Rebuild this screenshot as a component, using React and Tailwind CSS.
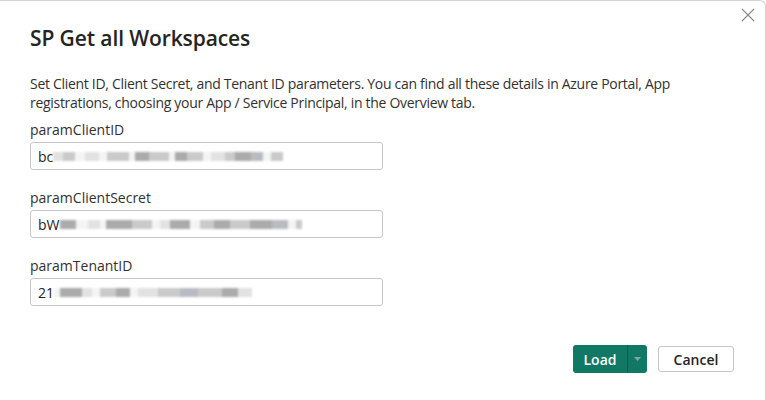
import React from "react";

const Blur = ({ blocks }) => (
  <div className="flex items-center blur-[1.3px]">
    {blocks.map((b, i) => (
      <div key={i} style={{ width: b[0], background: b[1], height: b[2] || 9 }} />
    ))}
  </div>
);

const Field = ({ label, prefix, blocks }) => (
  <div className="flex flex-col">
    <div className="text-[14px] leading-[18px] text-[#323130] mb-[3px]">{label}</div>
    <div className="w-[353px] h-[28px] border border-[#c8c6c4] rounded-[3px] flex items-center pl-[7px] text-[14px] text-[#252423]">
      <span>{prefix}</span>
      <Blur blocks={blocks} />
    </div>
  </div>
);

const g1 = "#cacaca", g2 = "#ababab", g3 = "#e2e2e2", g4 = "#b8bcc2", w = "#f4f4f4";

export default function App() {
  return (
    <div className="w-[766px] h-[400px] bg-white relative overflow-hidden" style={{ fontFamily: '"Open Sans", "Noto Sans", sans-serif' }}>
      <div className="absolute inset-0 border-t border-r border-[#d4d4d4] rounded-tr-[6px] pointer-events-none" />
      <button className="absolute right-[10px] top-[7px] w-[16px] h-[16px] flex items-center justify-center">
        <svg width="14" height="14" viewBox="0 0 14 14" fill="none" stroke="#8a8886" strokeWidth="1.1">
          <path d="M1 1 L13 13 M13 1 L1 13" />
        </svg>
      </button>
      <div className="pl-[30px] pt-[24px] flex flex-col">
        <h1 className="text-[21px] leading-[29px] font-semibold text-[#252423] tracking-[-0.1px]">SP Get all Workspaces</h1>
        <p className="mt-[21px] text-[14px] leading-[19px] text-[#323130] w-[700px] tracking-[-0.3px]">
          Set Client ID, Client Secret, and Tenant ID parameters. You can find all these details in Azure Portal, App registrations, choosing your App / Service Principal, in the Overview tab.
        </p>
        <div className="mt-[9px] flex flex-col gap-[19px]">
          <Field label="paramClientID" prefix="bc" blocks={[[10, g3], [12, g1], [10, w], [14, g3], [8, w], [22, g1], [6, w], [14, g2], [20, g1], [6, w], [12, g2], [16, g1], [8, w], [14, g3], [10, g1], [16, g2], [12, g4], [8, w], [12, g1]]} />
          <Field label="paramClientSecret" prefix="bW" blocks={[[16, g2], [12, w], [12, g3], [6, w], [26, g2], [20, g1], [8, w], [10, g3], [20, g2], [10, w], [14, g1], [16, g2], [20, g1], [22, g2], [16, g4], [8, w], [6, g1]]} />
          <Field label="paramTenantID" prefix="21" blocks={[[6, w], [22, g2], [10, g3], [8, w], [16, g1], [14, g2], [8, w], [20, g3], [22, g1], [18, g4], [24, g1], [16, g2], [14, g3]]} />
        </div>
      </div>
      <div className="absolute right-[32px] bottom-[27px] flex items-center gap-[11px]">
        <div className="flex h-[28px]">
          <button className="w-[55px] h-[28px] bg-[#117865] text-white text-[14px] font-semibold rounded-l-[3px] border-r border-[#0b5a4c]">Load</button>
          <button className="w-[19px] h-[28px] bg-[#117865] rounded-r-[3px] flex items-center justify-center">
            <svg width="7" height="4" viewBox="0 0 7 4"><path d="M0 0 L7 0 L3.5 4 Z" fill="#7fa89f" /></svg>
          </button>
        </div>
        <button className="w-[76px] h-[26px] bg-white border border-[#c8c6c4] rounded-[3px] text-[14px] font-semibold text-[#252423]">Cancel</button>
      </div>
    </div>
  );
}
